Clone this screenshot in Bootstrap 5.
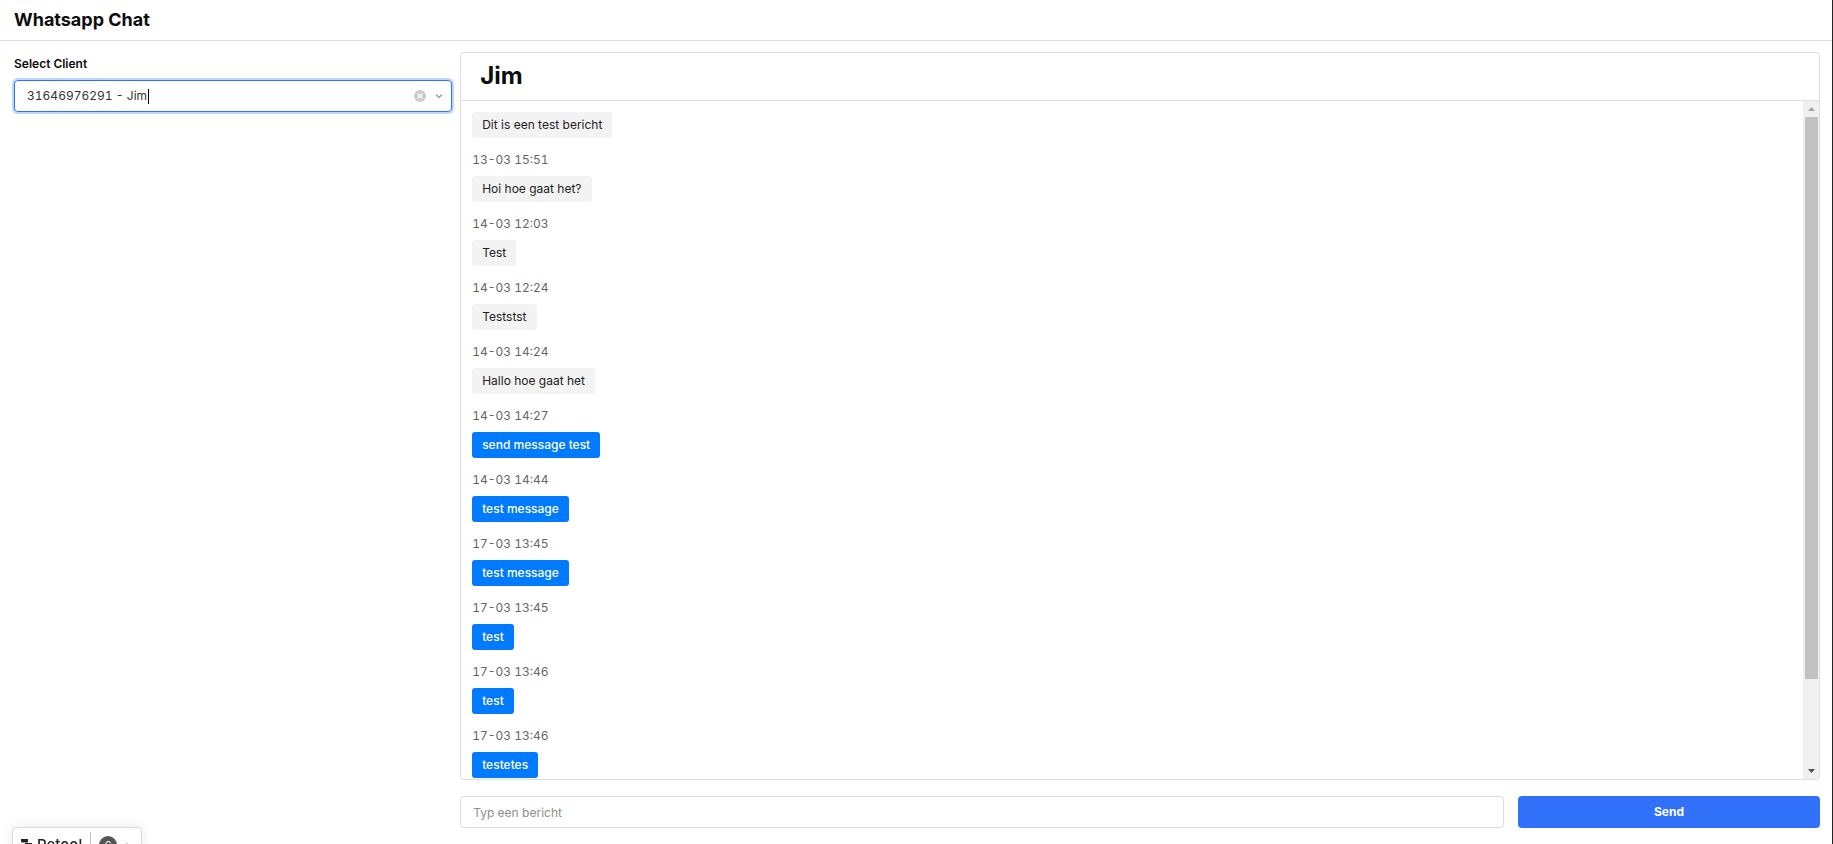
<!DOCTYPE html>
<html lang="nl">
<head>
<meta charset="utf-8">
<meta name="viewport" content="width=device-width, initial-scale=1">
<title>Whatsapp Chat</title>
<link href="https://cdn.jsdelivr.net/npm/bootstrap@5.3.0/dist/css/bootstrap.min.css" rel="stylesheet">
<style>
  :root { --line: #dfdfdf; --accent: #3170f9; --ink: #0d0d0d; }
  body { font-family: Inter, "Liberation Sans", sans-serif; font-size: 12px; line-height: 18px; color: var(--ink); background: #fff; border-right: 1px solid #20262b; }
  .app-bar { height: 41px; padding: 0 14px; border-bottom: 1px solid var(--line); }
  .app-bar h1 { font-size: 18px; line-height: 24px; font-weight: 700; }
  .workspace { display: grid; grid-template-columns: minmax(0, 29fr) minmax(0, 90fr); gap: 8px; padding: 11px 12px 16px 14px; min-height: 0; }
  .chat-column { min-height: 0; }
  .client-label { font-size: 12px; font-weight: 600; line-height: 24px; margin-bottom: 4px; }
  .client-field { height: 32px; border: 1px solid var(--accent); border-radius: 4px; padding: 0 7px 0 12px; box-shadow: 0 0 0 2px #c1d4fd; }
  .client-field select { appearance: none; border: 0; padding: 0; background: none; outline: 0; font-size: 12px; font-variant-numeric: tabular-nums; color: #333; }
  .text-caret { width: 1px; height: 15px; background: #000; }
  .chat-panel { border: 1px solid var(--line); border-radius: 4px; min-height: 0; overflow: hidden; }
  .chat-title { height: 48px; padding: 0 19px; border-bottom: 1px solid var(--line); }
  .chat-title h2 { font-size: 24px; line-height: 32px; font-weight: 700; margin-bottom: 2px; }
  .messages { min-height: 0; overflow: hidden; padding: 11px; }
  .bubble { padding: 4px 10px; border-radius: 3px; background: #f3f3f3; color: #222; }
  .bubble.sent { background: #007bff; color: #fff; font-weight: 500; }
  .messages time { display: block; margin: 13px 0 7px; color: #666; font-size: 12px; font-variant-numeric: tabular-nums; }
  .scroll-rail { width: 16px; background: #f0f0f0; padding: 0 1px 0 2px; }
  .scroll-rail svg { display: block; flex: none; }
  .scroll-track { min-height: 0; }
  .scroll-thumb { background: #c1c1c1; height: 87%; }
  .composer { display: grid; grid-template-columns: minmax(0, 38fr) minmax(0, 11fr); gap: 14px; margin-top: 16px; }
  .composer .form-control, .composer .btn { height: 32px; font-size: 12px; line-height: 18px; border-radius: 4px; padding: 0 12px; }
  .composer .form-control { border-color: var(--line); }
  .composer .form-control::placeholder { color: #8e8e8e; }
  .composer .btn { background: var(--accent); border: 0; color: #fff; font-weight: 700; }
  .maker-pill { left: 12px; bottom: -18px; height: 35px; width: 130px; padding: 0 10px 0 8px; background: #fff; border: 1px solid #dcdcdc; border-radius: 4px; box-shadow: 0 0 12px #00000018; }
  .maker-pill .brand { font-size: 15px; font-weight: 500; color: #222; }
  .maker-pill .avatar { width: 18px; height: 18px; border-radius: 50%; background: #555; color: #fff; font-size: 11px; line-height: 18px; }
</style>
<script src="https://cdn.jsdelivr.net/npm/bootstrap@5.3.0/dist/js/bootstrap.bundle.min.js"></script>
</head>
<body class="vh-100 d-flex flex-column overflow-hidden">
  <header class="app-bar d-flex align-items-center flex-shrink-0"><h1 class="mb-0">Whatsapp Chat</h1></header>
  <main class="workspace flex-grow-1">
    <section>
      <label class="client-label d-block" for="client">Select Client</label>
      <div class="client-field d-flex align-items-center">
        <select id="client"><option>31646976291 - Jim</option></select>
        <span class="text-caret"></span>
        <button type="button" class="btn border-0 p-0 ms-auto d-flex" aria-label="Clear">
          <svg width="12" height="12" viewBox="0 0 12 12"><circle cx="6" cy="6" r="6" fill="#ccc"/><path d="M3.7 3.7l4.6 4.6M8.3 3.7L3.7 8.3" stroke="#fff" stroke-width="1.3"/></svg>
        </button>
        <svg class="ms-2" width="10" height="8" viewBox="0 0 10 8"><path d="M2 2.500l3 3 3-3" fill="none" stroke="#a3a3a3" stroke-width="1.5"/></svg>
      </div>
    </section>
    <section class="chat-column d-flex flex-column">
      <div class="chat-panel flex-grow-1 d-flex flex-column">
        <div class="chat-title d-flex align-items-center flex-shrink-0"><h2>Jim</h2></div>
        <div class="d-flex flex-grow-1 overflow-hidden">
          <div class="messages flex-grow-1 d-flex flex-column align-items-start">
            <div class="bubble">Dit is een test bericht</div><time>13-03 15:51</time>
            <div class="bubble">Hoi hoe gaat het?</div><time>14-03 12:03</time>
            <div class="bubble">Test</div><time>14-03 12:24</time>
            <div class="bubble">Teststst</div><time>14-03 14:24</time>
            <div class="bubble">Hallo hoe gaat het</div><time>14-03 14:27</time>
            <div class="bubble sent">send message test</div><time>14-03 14:44</time>
            <div class="bubble sent">test message</div><time>17-03 13:45</time>
            <div class="bubble sent">test message</div><time>17-03 13:45</time>
            <div class="bubble sent">test</div><time>17-03 13:46</time>
            <div class="bubble sent">test</div><time>17-03 13:46</time>
            <div class="bubble sent">testetes</div>
          </div>
          <div class="scroll-rail d-flex flex-column flex-shrink-0">
            <svg width="13" height="16" viewBox="0 0 13 16"><path d="M3 10l3.500-4 3.500 4z" fill="#a3a3a3"/></svg>
            <div class="scroll-track flex-grow-1"><div class="scroll-thumb"></div></div>
            <svg width="13" height="16" viewBox="0 0 13 16"><path d="M3 6h7l-3.500 4z" fill="#505050"/></svg>
          </div>
        </div>
      </div>
      <form class="composer flex-shrink-0">
        <input class="form-control" type="text" placeholder="Typ een bericht" aria-label="Typ een bericht">
        <button class="btn" type="button">Send</button>
      </form>
    </section>
  </main>
  <div class="maker-pill position-fixed d-flex align-items-center">
    <svg width="12" height="12" viewBox="0 0 12 12" fill="#222"><path d="M0 0h7v3.500H1.500A1.500 1.500 0 0 1 0 2zM4 4h7v3.500H5.500A1.500 1.500 0 0 1 4 6zM0 8.500h7V12H1.500A1.500 1.500 0 0 1 0 10.500z"/></svg>
    <span class="brand ms-1">Retool</span>
    <span class="vr ms-2 my-1 opacity-25"></span>
    <span class="avatar text-center ms-2">6</span>
    <svg class="ms-auto" width="8" height="8" viewBox="0 0 8 8"><path d="M1.500 5L4 2.500 6.500 5" fill="none" stroke="#888"/></svg>
  </div>
</body>
</html>
